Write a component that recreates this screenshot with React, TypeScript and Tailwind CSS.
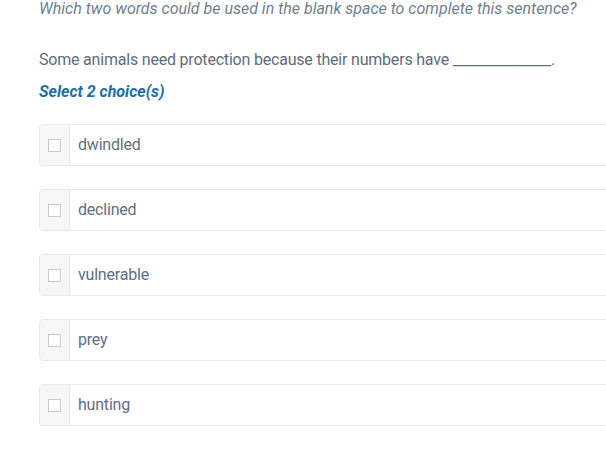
import React from "react";

const choices = ["dwindled", "declined", "vulnerable", "prey", "hunting"];

export default function App() {
  return (
    <div
      className="w-[606px] h-[475px] overflow-hidden bg-white pl-[39px]"
      style={{ fontFamily: "Roboto, 'Liberation Sans', sans-serif" }}
    >
      <div className="w-[620px]">
        <p className="italic text-[16px] leading-[20px] text-[#6e7f8f] -mt-[1px]">
          Which two words could be used in the blank space to complete this sentence?
        </p>
        <p className="text-[16px] leading-[20px] tracking-[-0.2px] text-[#5d6d7e] mt-[31px]">
          Some animals need protection because their numbers have ______________.
        </p>
        <p className="italic font-bold text-[16px] leading-[20px] text-[#1b6fa5] mt-[12px]">
          Select 2 choice(s)
        </p>
        <div className="mt-[22px] flex flex-col gap-[23px]">
          {choices.map((c) => (
            <div
              key={c}
              className="flex h-[42px] border border-[#e6e8ea] rounded-[4px] bg-white"
            >
              <div className="w-[30px] flex items-center justify-center bg-[#f7f7f7] border-r border-[#e6e8ea] rounded-l-[4px]">
                <span className="block w-[13px] h-[13px] border-[1.5px] border-[#c8c8c8] bg-white" />
              </div>
              <div className="flex items-center pl-[8px] text-[16px] tracking-[-0.2px] text-[#5f7080]">
                {c}
              </div>
            </div>
          ))}
        </div>
      </div>
    </div>
  );
}
